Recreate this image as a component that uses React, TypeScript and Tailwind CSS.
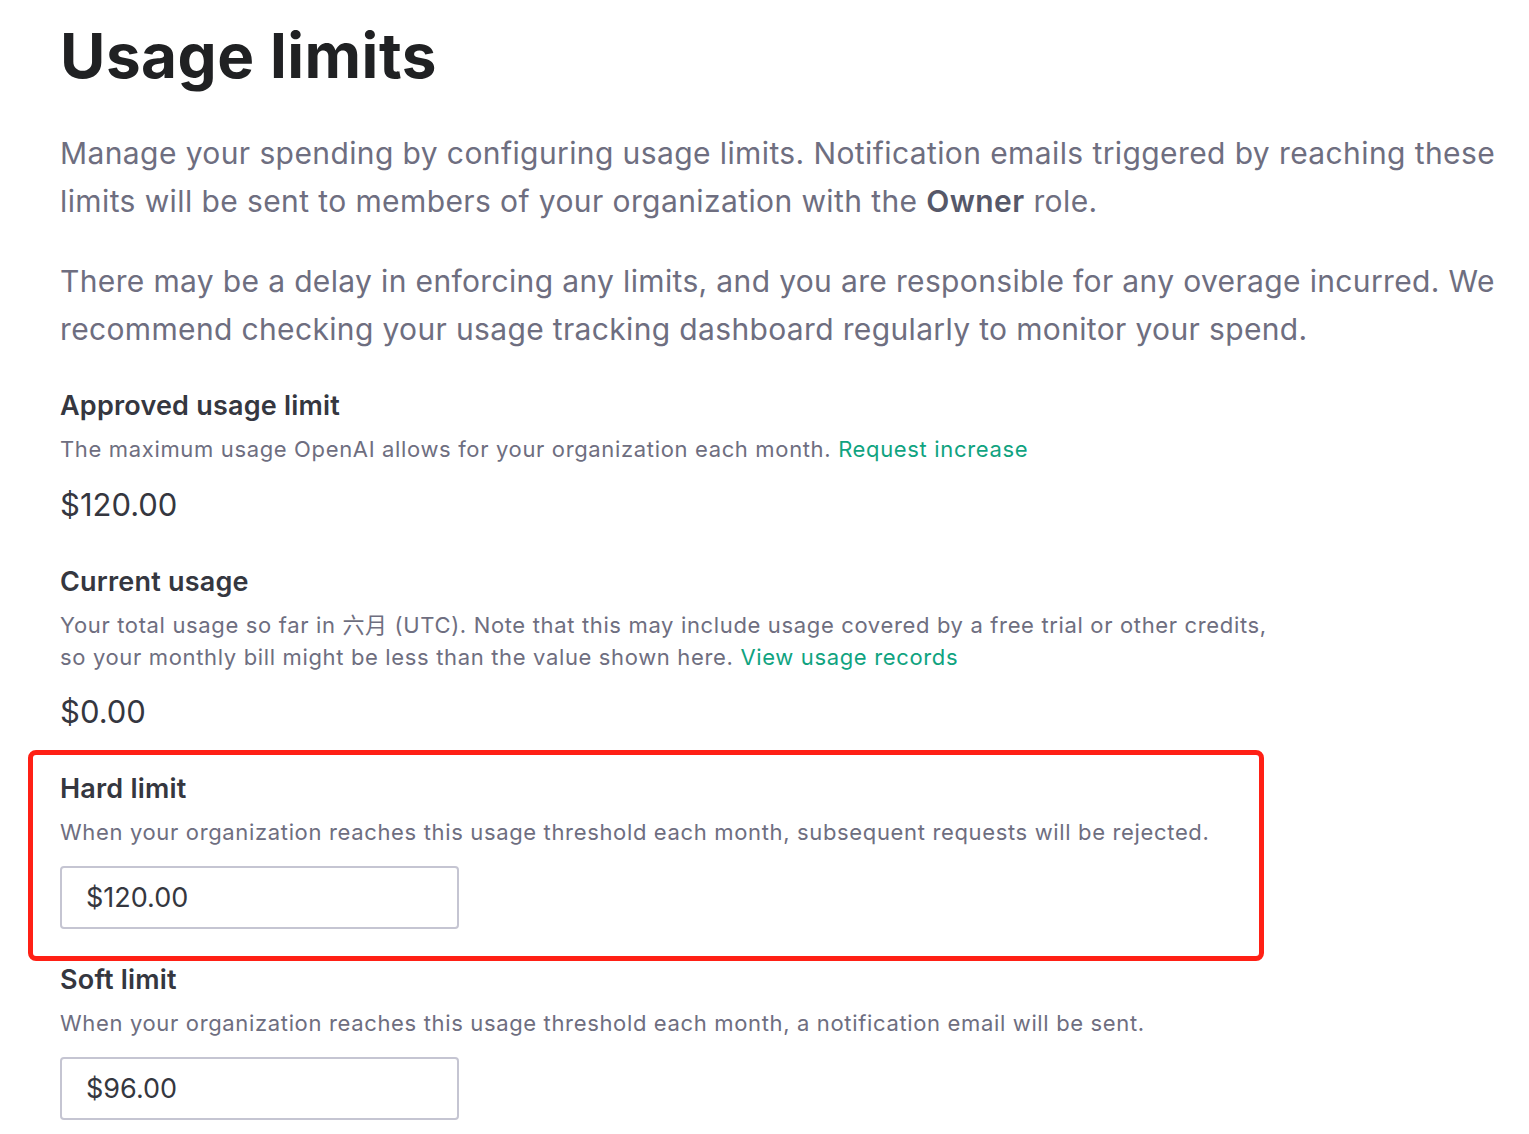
const font = { fontFamily: 'Inter, "Noto Sans CJK SC", sans-serif' };

function Section({
    title,
    children,
}: {
    title: string;
    children: React.ReactNode;
}) {
    return (
        <div>
            <h3 className="text-[27px] font-semibold leading-[32px] tracking-[0.2px] text-[#353740]">{title}</h3>
            {children}
        </div>
    );
}

function AmountInput({ value }: { value: string }) {
    return (
        <input
            className="mt-[18px] h-[63px] w-[399px] rounded-[4px] border-2 border-[#c5c5d2] bg-white px-[24px] text-[27px] text-[#353740] outline-none"
            defaultValue={value}
        />
    );
}

const desc = 'mt-[11px] text-[22px] leading-[32px] tracking-[0.65px] text-[#6e6e80]';

export default function App() {
    return (
        <div className="min-h-screen bg-white pl-[60px] pr-4 antialiased" style={font}>
            <h1 className="pt-[18px] text-[62px] font-bold leading-[76px] tracking-[0.5px] text-[#202123]">
                Usage limits
            </h1>
            <p className="mt-[35px] text-[30px] leading-[48px] tracking-[0.4px] text-[#6e6e80]">
                Manage your spending by configuring usage limits. Notification emails triggered by reaching these
                limits will be sent to members of your organization with the{' '}
                <span className="font-semibold text-[#565869]">Owner</span> role.
            </p>
            <p className="mt-[32px] text-[30px] leading-[48px] tracking-[0.35px] text-[#6e6e80]">
                There may be a delay in enforcing any limits, and you are responsible for any overage incurred. We
                recommend checking your usage tracking dashboard regularly to monitor your spend.
            </p>

            <div className="mt-[37px]">
                <Section title="Approved usage limit">
                    <p className={desc}>
                        The maximum usage OpenAI allows for your organization each month.{' '}
                        <span className="text-[#10a37f]">Request increase</span>
                    </p>
                    <div className="mt-[22px] text-[31px] leading-[36px] text-[#353740]">$120.00</div>
                </Section>
            </div>

            <div className="mt-[43px] w-[1220px]">
                <Section title="Current usage">
                    <p className={desc}>
                        Your total usage so far in 六月 (UTC). Note that this may include usage covered by a free trial
                        or other credits, so your monthly bill might be less than the value shown here.{' '}
                        <span className="text-[#10a37f]">View usage records</span>
                    </p>
                    <div className="mt-[21px] text-[31px] leading-[36px] text-[#353740]">$0.00</div>
                </Section>
            </div>

            <div className="-ml-[32px] mt-[20px] w-[1236px] rounded-[8px] border-[5px] border-[#ff2015] pb-[27px] pl-[27px] pt-[18px]">
                <Section title="Hard limit">
                    <p className={desc}>
                        When your organization reaches this usage threshold each month, subsequent requests will be
                        rejected.
                    </p>
                    <AmountInput value="$120.00" />
                </Section>
            </div>

            <div className="mt-[3px] pb-[20px]">
                <Section title="Soft limit">
                    <p className={desc}>
                        When your organization reaches this usage threshold each month, a notification email will be
                        sent.
                    </p>
                    <AmountInput value="$96.00" />
                </Section>
            </div>
        </div>
    );
}
